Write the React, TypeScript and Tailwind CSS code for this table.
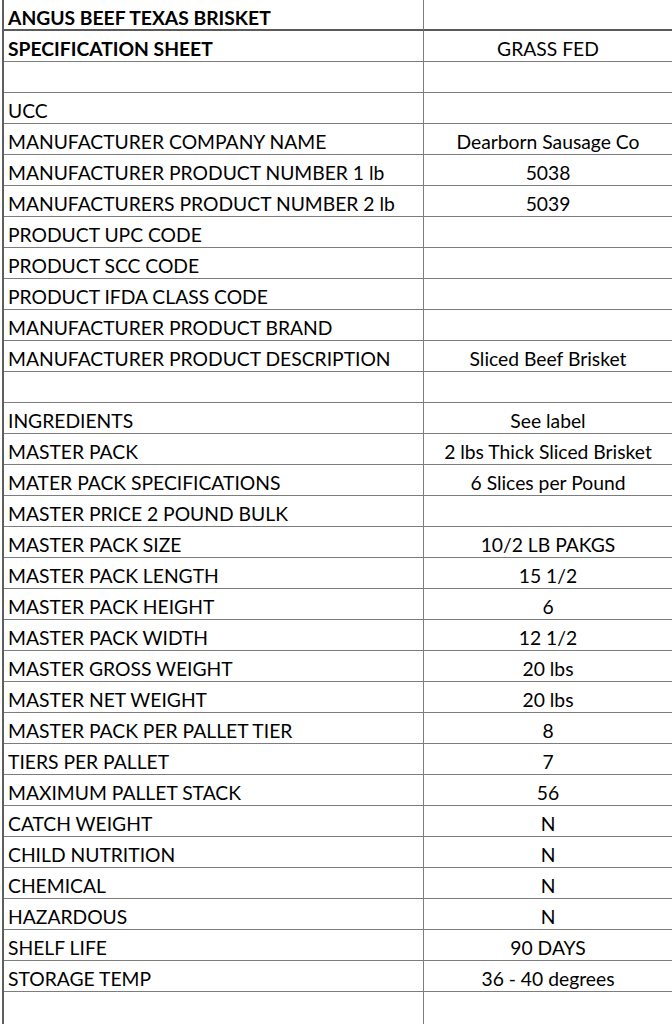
const rows: [string, string][] = [
  ["ANGUS BEEF TEXAS BRISKET", ""],
  ["SPECIFICATION SHEET", "GRASS FED"],
  ["", ""],
  ["UCC", ""],
  ["MANUFACTURER COMPANY NAME", "Dearborn Sausage Co"],
  ["MANUFACTURER PRODUCT NUMBER 1 lb", "5038"],
  ["MANUFACTURERS PRODUCT NUMBER 2 lb", "5039"],
  ["PRODUCT UPC CODE", ""],
  ["PRODUCT SCC CODE", ""],
  ["PRODUCT IFDA CLASS CODE", ""],
  ["MANUFACTURER PRODUCT BRAND", ""],
  ["MANUFACTURER PRODUCT DESCRIPTION", "Sliced Beef Brisket"],
  ["", ""],
  ["INGREDIENTS", "See label"],
  ["MASTER PACK", "2 lbs Thick Sliced Brisket"],
  ["MATER PACK SPECIFICATIONS", "6 Slices per Pound"],
  ["MASTER PRICE 2 POUND BULK", ""],
  ["MASTER PACK SIZE", "10/2 LB PAKGS"],
  ["MASTER PACK LENGTH", "15 1/2"],
  ["MASTER PACK HEIGHT", "6"],
  ["MASTER PACK WIDTH", "12 1/2"],
  ["MASTER GROSS WEIGHT", "20 lbs"],
  ["MASTER NET WEIGHT", "20 lbs"],
  ["MASTER PACK PER PALLET TIER", "8"],
  ["TIERS PER PALLET", "7"],
  ["MAXIMUM PALLET STACK", "56"],
  ["CATCH WEIGHT", "N"],
  ["CHILD NUTRITION", "N"],
  ["CHEMICAL", "N"],
  ["HAZARDOUS", "N"],
  ["SHELF LIFE", "90 DAYS"],
  ["STORAGE TEMP", "36 - 40 degrees"],
  ["", ""],
];

export default function App() {
  return (
    <div className="w-[672px] h-[1024px] overflow-hidden bg-white pl-[2px] font-['Lato',sans-serif] text-[19.3px] text-black">
      <div className="border-l-2 border-[#5f5f5f] h-full">
        {rows.map(([label, value], i) => (
          <div
            key={i}
            className={
              "grid grid-cols-[420px_1fr] " +
              (i === rows.length - 1
                ? "h-[32px]"
                : i === 0
                ? "h-[31px] border-b-2 border-[#5a5a5a]"
                : "h-[31px] border-b border-[#7d7d7d]")
            }
          >
            <div
              className={
                "border-r border-[#7d7d7d] pl-[4px] pt-[5px] leading-[25px] whitespace-nowrap " +
                (i < 2 ? "font-bold" : "")
              }
            >
              {label}
            </div>
            <div className="text-center pt-[5px] leading-[25px] whitespace-nowrap">{value}</div>
          </div>
        ))}
      </div>
    </div>
  );
}
